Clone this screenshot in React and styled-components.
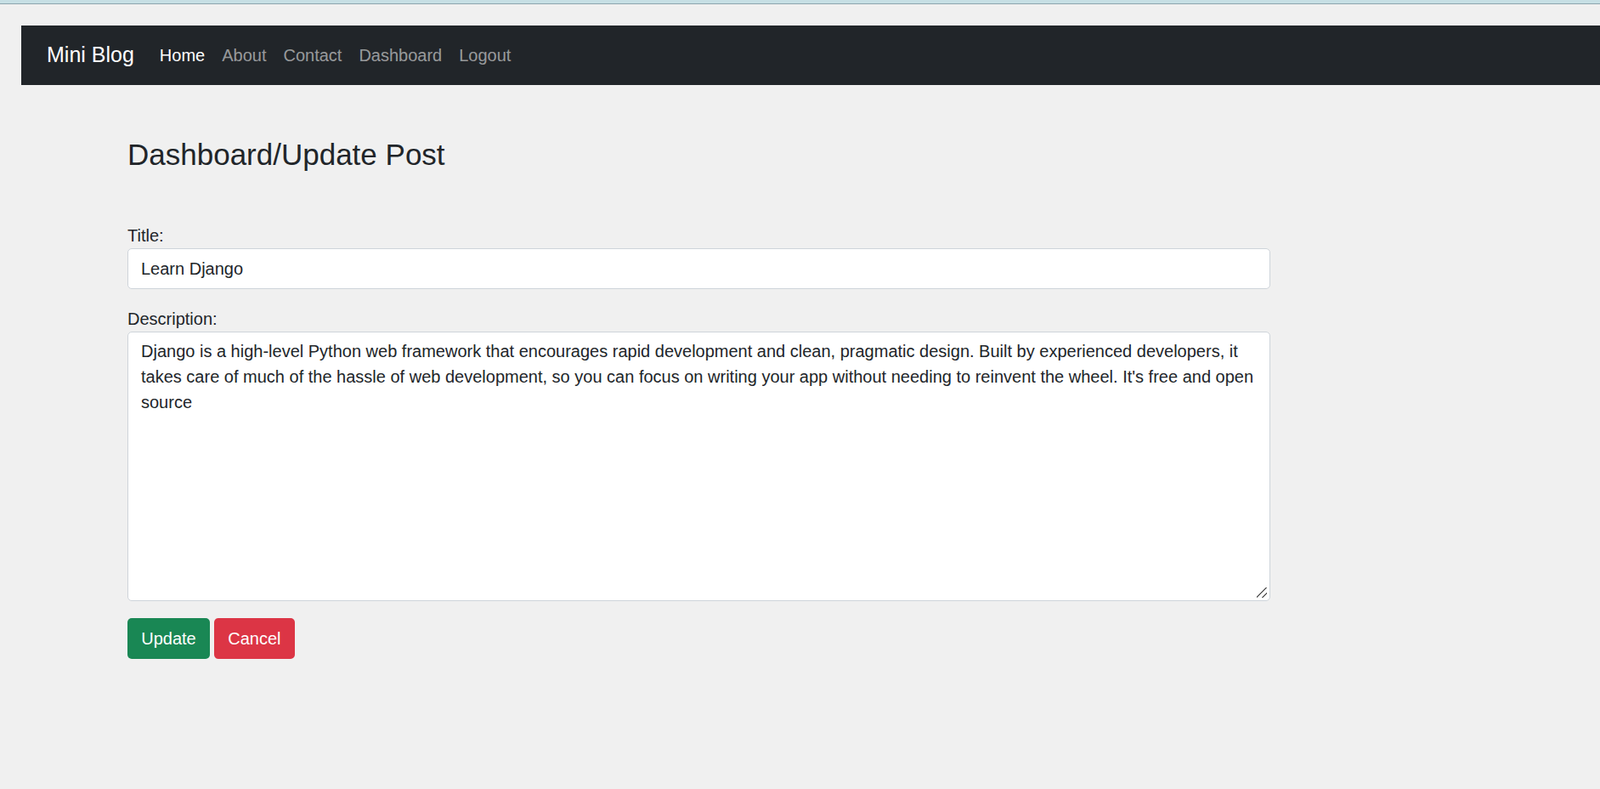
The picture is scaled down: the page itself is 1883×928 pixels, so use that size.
import React from "react";
import styled, { createGlobalStyle } from "styled-components";

const GlobalStyle = createGlobalStyle`
  * { box-sizing: border-box; }
  html, body { margin: 0; padding: 0; min-height: 100%; }
  body {
    background: #f0f0f0;
    color: #212529;
    font-family: "Liberation Sans", Arial, sans-serif;
    font-size: 20px;
    line-height: 1.5;
  }
`;

const TopStrip = styled.div`
  height: 5px;
  background: #c6dfe4;
  border-bottom: 1px solid #8da5ad;
`;

const Page = styled.div`
  padding: 25px 0 0 25px;
  min-height: 923px;
`;

const Navbar = styled.nav`
  display: flex;
  align-items: center;
  height: 70px;
  padding-left: 30px;
  background: #212529;
`;

const Brand = styled.a`
  margin-right: 30px;
  font-size: 25px;
  color: #fff;
  text-decoration: none;
`;

const NavLinks = styled.div`
  display: flex;
  gap: 20px;
`;

const NavLink = styled.a`
  color: ${(p) => (p.$active ? "#fff" : "rgba(255, 255, 255, 0.55)")};
  text-decoration: none;
`;

const Content = styled.main`
  width: 1345px;
  margin-left: 125px;
`;

const Heading = styled.h3`
  margin: 61px 0 0;
  font-size: 35px;
  font-weight: 400;
  line-height: 1.2;
`;

const Form = styled.form`
  margin-top: 59px;
`;

const Field = styled.div`
  margin-bottom: 20px;
`;

const Label = styled.label`
  display: block;
  height: 30px;
`;

const TextInput = styled.input`
  display: block;
  width: 100%;
  height: 48px;
  padding: 7px 15px;
  border: 1px solid #ced4da;
  border-radius: 5px;
  background: #fff;
  color: #212529;
  font: inherit;
  outline: none;
`;

const TextArea = styled.textarea`
  display: block;
  width: 100%;
  height: 317px;
  padding: 7px 15px;
  border: 1px solid #ced4da;
  border-radius: 5px;
  background: #fff;
  color: #212529;
  font: inherit;
  outline: none;
  resize: vertical;

  &::-webkit-resizer {
    background: linear-gradient(
        135deg,
        transparent 44%,
        #666 44%,
        #666 54%,
        transparent 54%,
        transparent 72%,
        #666 72%,
        #666 82%,
        transparent 82%
      )
      top left / 12px 12px no-repeat;
  }
`;

const Buttons = styled.div`
  display: flex;
  gap: 5px;
`;

const Button = styled.button`
  height: 48px;
  padding: 0 16.25px;
  border: 0;
  border-radius: 5px;
  background: ${(p) => (p.$danger ? "#dc3545" : "#198754")};
  color: #fff;
  font: inherit;
`;

const DESCRIPTION =
  "Django is a high-level Python web framework that encourages rapid development and clean, pragmatic design. Built by experienced developers, it takes care of much of the hassle of web development, so you can focus on writing your app without needing to reinvent the wheel. It's free and open source";

export default function App() {
  return (
    <>
      <GlobalStyle />
      <TopStrip />
      <Page>
        <Navbar>
          <Brand href="#">Mini Blog</Brand>
          <NavLinks>
            <NavLink href="#" $active>Home</NavLink>
            <NavLink href="#">About</NavLink>
            <NavLink href="#">Contact</NavLink>
            <NavLink href="#">Dashboard</NavLink>
            <NavLink href="#">Logout</NavLink>
          </NavLinks>
        </Navbar>
        <Content>
          <Heading>Dashboard/Update Post</Heading>
          <Form onSubmit={(e) => e.preventDefault()}>
            <Field>
              <Label htmlFor="title">Title:</Label>
              <TextInput id="title" type="text" defaultValue="Learn Django" />
            </Field>
            <Field>
              <Label htmlFor="desc">Description:</Label>
              <TextArea id="desc" defaultValue={DESCRIPTION} />
            </Field>
            <Buttons>
              <Button type="submit">Update</Button>
              <Button type="button" $danger>Cancel</Button>
            </Buttons>
          </Form>
        </Content>
      </Page>
    </>
  );
}
